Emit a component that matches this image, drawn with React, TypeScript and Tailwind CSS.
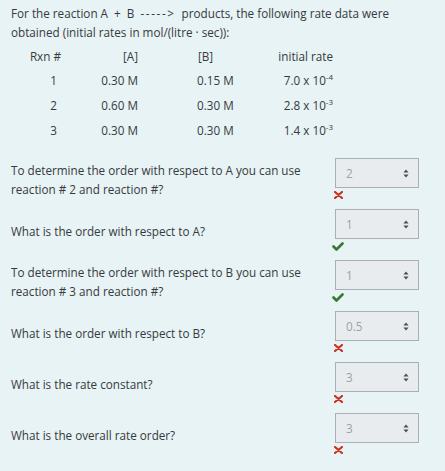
import React from "react";

const font = { fontFamily: '"Open Sans", "Noto Sans", sans-serif' };

function XMark() {
  return (
    <svg width="9" height="8" viewBox="0 0 9 8" className="block">
      <path d="M1 1 L8 7 M8 1 L1 7" stroke="#ca3120" strokeWidth="2.2" strokeLinecap="round" />
    </svg>
  );
}

function Check() {
  return (
    <svg width="12" height="9" viewBox="0 0 12 9" className="block">
      <path d="M1.5 4.5 L4.5 7.5 L10.5 1.5" stroke="#357a32" strokeWidth="2.6" fill="none" strokeLinecap="round" strokeLinejoin="round" />
    </svg>
  );
}

function SortIcon() {
  return (
    <svg width="6" height="9" viewBox="0 0 6 9" className="block">
      <path d="M3 0.5 L5.6 3.6 H0.4 Z M3 8.5 L5.6 5.4 H0.4 Z" fill="#495057" />
    </svg>
  );
}

type Q = { lines: string[]; value: string; ok: boolean };

const questions: Q[] = [
  { lines: ["To determine the order with respect to A you can use", "reaction # 2 and reaction #?"], value: "2", ok: false },
  { lines: ["What is the order with respect to A?"], value: "1", ok: true },
  { lines: ["To determine the order with respect to B you can use", "reaction # 3 and reaction #?"], value: "1", ok: true },
  { lines: ["What is the order with respect to B?"], value: "0.5", ok: false },
  { lines: ["What is the rate constant?"], value: "3", ok: false },
  { lines: ["What is the overall rate order?"], value: "3", ok: false },
];

const rows = [
  ["1", "0.30 M", "0.15 M", "7.0 x 10", "-4"],
  ["2", "0.60 M", "0.30 M", "2.8 x 10", "-3"],
  ["3", "0.30 M", "0.30 M", "1.4 x 10", "-3"],
];

export default function App() {
  return (
    <div className="w-[445px] h-[471px] bg-[#e7f3f5] text-[#373a3c] pl-[11px] pt-[4px] text-[11.7px] leading-[19px]" style={font}>
      <p>
        For the reaction A&nbsp;&nbsp;+&nbsp;&nbsp;B&nbsp;&nbsp;<span className="tracking-[1.6px]">-----&gt;</span>&nbsp;&nbsp;products, the following rate data were
        <br />
        obtained (initial rates in mol/(litre · sec)):
      </p>
      <div className="mt-[3px] grid grid-cols-[50px_77px_112px_83px]">
        <div className="h-[23px] flex items-center justify-end">Rxn #</div>
        <div className="h-[23px] flex items-center justify-end">[A]</div>
        <div className="h-[23px] flex items-center pl-[60px]">[B]</div>
        <div className="h-[23px] flex items-center justify-end">initial rate</div>
        {rows.map((r) => (
          <React.Fragment key={r[0]}>
            <div className="h-[25px] flex items-center justify-end pr-[4px]">{r[0]}</div>
            <div className="h-[25px] flex items-center justify-end">{r[1]}</div>
            <div className="h-[25px] flex items-center pl-[59px]">{r[2]}</div>
            <div className="h-[25px] flex items-center justify-end">
              <span>
                {r[3]}
                <sup className="text-[8px] top-[-5px]">{r[4]}</sup>
              </span>
            </div>
          </React.Fragment>
        ))}
      </div>
      <div className="mt-[15px] flex flex-col gap-[7px]">
        {questions.map((q, i) => (
          <div key={i} className="flex items-center h-[44px]">
            <div className="w-[324px]">
              {q.lines.map((l, j) => (
                <div key={j}>{l}</div>
              ))}
            </div>
            <div className="flex flex-col h-[44px]">
              <div className="w-[84px] h-[30px] border border-[#a9b0b5] bg-[#e9ecef] flex items-center justify-between pl-[10px] pr-[9px] text-[#9ba2a8]">
                <span>{q.value}</span>
                <SortIcon />
              </div>
              <div className="h-[14px] flex items-center">
                {q.ok ? <div className="ml-[-3px]"><Check /></div> : <div className="ml-[-1px]"><XMark /></div>}
              </div>
            </div>
          </div>
        ))}
      </div>
    </div>
  );
}
